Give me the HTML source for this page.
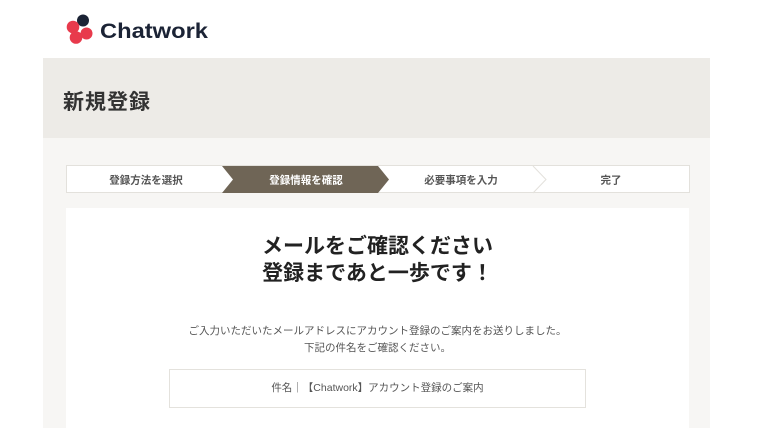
<!DOCTYPE html>
<html><head><meta charset="utf-8"><style>
body{margin:0;width:760px;height:428px;background:#fff;font-family:"Liberation Sans","Noto Sans CJK JP",sans-serif;position:relative;overflow:hidden}
.logo{position:absolute;left:65px;top:14px}
.panel{position:absolute;left:43px;top:58px;width:667px;height:370px;background:#f7f6f4}
.head{position:absolute;left:0;top:0;width:667px;height:80px;background:#edebe7}
.head h1{margin:0;position:absolute;left:20px;top:28px;font-size:21px;font-weight:bold;color:#333;letter-spacing:1px}
.card{position:absolute;left:23px;top:150px;width:623px;height:230px;background:#fff}
.t{position:absolute;left:0;width:623px;text-align:center;font-size:21px;font-weight:bold;color:#222;line-height:27px;top:25px}
.p{position:absolute;left:0;width:623px;text-align:center;font-size:10.5px;color:#555;line-height:17px;top:115px}
.box{position:absolute;left:103px;top:161px;width:415px;height:37px;border:1px solid #e4e2dd;text-align:center;line-height:37px;font-size:10.5px;color:#555}
</style></head><body>
<svg class="logo" width="150" height="32" viewBox="0 0 150 32">
<circle cx="18" cy="6.5" r="6" fill="#1b2335"/>
<circle cx="8" cy="13" r="6.3" fill="#e83a4c"/>
<circle cx="11" cy="23.5" r="6.3" fill="#e83a4c"/>
<circle cx="21.5" cy="19.5" r="6" fill="#e83a4c"/>
<text x="35" y="24" font-family="Liberation Sans,sans-serif" font-size="21" font-weight="bold" fill="#1b2335" textLength="108" lengthAdjust="spacingAndGlyphs">Chatwork</text>
</svg>
<div class="panel">
<div class="head"><h1>新規登録</h1></div>
</div>
<svg style="position:absolute;left:0;top:0" width="760" height="428">
<rect x="66.5" y="165.5" width="623" height="27" fill="#fff" stroke="#e3e1dc"/>
<polygon points="222,166 378,166 389,179.5 378,193 222,193 233,179.5" fill="#6f6556"/>
<polyline points="533,166 546,179.5 533,193" fill="none" stroke="#e3e1dc"/>
<g font-family="Liberation Sans,Noto Sans CJK JP,sans-serif" font-size="10.5" font-weight="bold" text-anchor="middle">
<text x="146" y="183.5" fill="#555">登録方法を選択</text>
<text x="306" y="183.5" fill="#fff">登録情報を確認</text>
<text x="461" y="183.5" fill="#555">必要事項を入力</text>
<text x="611" y="183.5" fill="#555">完了</text>
</g>
</svg>
<div class="card" style="left:66px;top:208px">
<div class="t">メールをご確認ください<br>登録まであと一歩です！</div>
<div class="p">ご入力いただいたメールアドレスにアカウント登録のご案内をお送りしました。<br>下記の件名をご確認ください。</div>
<div class="box">件名｜【Chatwork】アカウント登録のご案内</div>
</div>
</body></html>
